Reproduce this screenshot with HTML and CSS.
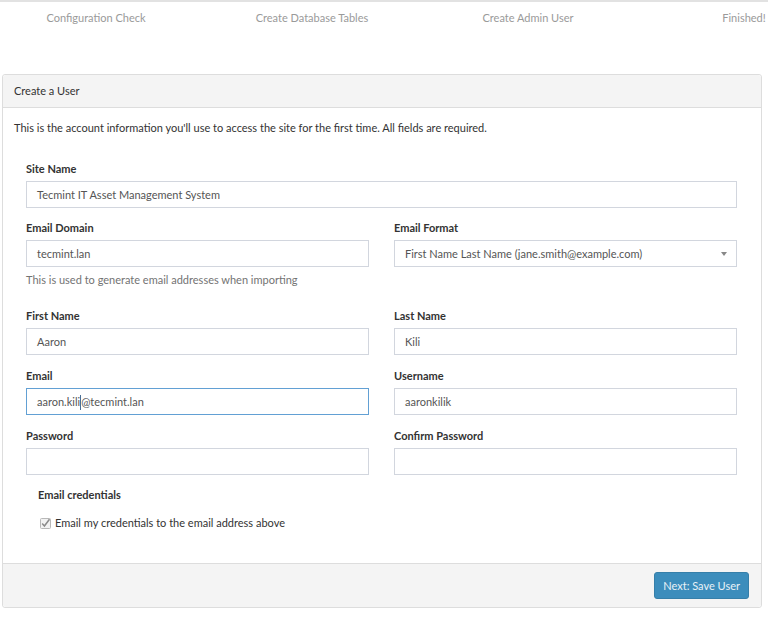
FILE: index.html
```html
<!DOCTYPE html>
<html>
<head>
<meta charset="utf-8">
<link rel="stylesheet" href="styles.css">
</head>
<body>
<div class="steps">
  <div class="step">Configuration Check</div>
  <div class="step">Create Database Tables</div>
  <div class="step">Create Admin User</div>
  <div class="step">Finished!</div>
</div>
<div class="panel">
  <div class="panel-header">Create a User</div>
  <div class="panel-body">
    <p class="intro">This is the account information you'll use to access the site for the first time. All fields are required.</p>
    <div class="form">
      <div class="group full first">
        <div class="label">Site Name</div>
        <div class="input">Tecmint IT Asset Management System</div>
      </div>
      <div class="group">
        <div class="label">Email Domain</div>
        <div class="input">tecmint.lan</div>
        <div class="help">This is used to generate email addresses when importing</div>
      </div>
      <div class="group">
        <div class="label">Email Format</div>
        <div class="input select">First Name Last Name (jane.smith@example.com)<span class="arrow"></span></div>
      </div>
      <div class="group">
        <div class="label">First Name</div>
        <div class="input">Aaron</div>
      </div>
      <div class="group">
        <div class="label">Last Name</div>
        <div class="input">Kili</div>
      </div>
      <div class="group">
        <div class="label">Email</div>
        <div class="input focus">aaron.kili<span class="caret"></span>@tecmint.lan</div>
      </div>
      <div class="group">
        <div class="label">Username</div>
        <div class="input">aaronkilik</div>
      </div>
      <div class="group">
        <div class="label">Password</div>
        <div class="input"></div>
      </div>
      <div class="group">
        <div class="label">Confirm Password</div>
        <div class="input"></div>
      </div>
      <div class="group full creds">
        <div class="label">Email credentials</div>
        <div class="check">
          <svg class="cb" width="11" height="11" viewBox="0 0 11 11"><rect x="0.5" y="0.5" width="10" height="10" rx="1" fill="#f2f2f2" stroke="#b8b8b8"/><path d="M2.2 5.6 L4.4 8 L9.5 1.2" fill="none" stroke="#8a8a8a" stroke-width="1.5"/></svg>
          <span>Email my credentials to the email address above</span>
        </div>
      </div>
    </div>
  </div>
  <div class="panel-footer">
    <div class="btn">Next: Save User</div>
  </div>
</div>
</body>
</html>
```

FILE: styles.css
```css
html, body {
  margin: 0;
  padding: 0;
  background: #fff;
}
body {
  font-family: "Lato", "Open Sans", sans-serif;
  font-size: 11px;
  color: #333;
  width: 768px;
  overflow: hidden;
}
.steps {
  border-top: 2px solid #e2e2e2;
  display: grid;
  grid-template-columns: repeat(4, 216px);
  margin-left: -12px;
  padding-top: 8px;
  height: 64px;
}
.step {
  text-align: center;
  line-height: 16px;
  color: #9a9a9a;
  white-space: nowrap;
}
.panel {
  margin: 0 6px 0 2px;
  border: 1px solid #ddd;
  border-radius: 3px;
  background: #fff;
}
.panel-header {
  background: #f4f4f4;
  border-bottom: 1px solid #ddd;
  height: 32px;
  padding: 0 11px;
  line-height: 32px;
  color: #333;
  border-radius: 3px 3px 0 0;
}
.panel-body {
  padding: 12px 11px 32px;
}
.intro {
  margin: 0;
  line-height: 16px;
}
.form {
  margin: 26px 13px 0 12px;
  display: grid;
  grid-template-columns: 1fr 1fr;
  column-gap: 25px;
  row-gap: 14px;
}
.full {
  grid-column: 1 / span 2;
}
.first {
  margin-bottom: -1px;
}
.label {
  font-weight: bold;
  line-height: 14px;
  margin-bottom: 5px;
  color: #333;
}
.input {
  box-sizing: border-box;
  height: 27px;
  border: 1px solid #d2d6de;
  padding: 0 10px;
  line-height: 25px;
  color: #555;
  position: relative;
  white-space: nowrap;
}
.input.focus {
  border-color: #62a0d4;
}
.caret {
  display: inline-block;
  width: 1px;
  height: 15px;
  background: #4a6f95;
  vertical-align: -4px;
}
.arrow {
  position: absolute;
  right: 9px;
  top: 11px;
  border-left: 3.5px solid transparent;
  border-right: 3.5px solid transparent;
  border-top: 4px solid #888;
}
.help {
  margin-top: 5px;
  line-height: 16px;
  color: #737373;
  margin-bottom: 7px;
}
.creds {
  padding-left: 12px;
  margin-top: -1px;
}
.creds .label {
  margin-bottom: 13px;
}
.check {
  display: flex;
  align-items: center;
  gap: 4px;
  line-height: 16px;
  padding-left: 2px;
}
.cb {
  flex: none;
}
.panel-footer {
  background: #f4f4f4;
  border-top: 1px solid #ddd;
  padding: 8px 12px;
  display: flex;
  justify-content: flex-end;
  border-radius: 0 0 3px 3px;
}
.btn {
  background: #3c8dbc;
  border: 1px solid #367fa9;
  border-radius: 3px;
  color: #e8f1f7;
  height: 27px;
  box-sizing: border-box;
  line-height: 25px;
  padding: 0 8px;
}
```
